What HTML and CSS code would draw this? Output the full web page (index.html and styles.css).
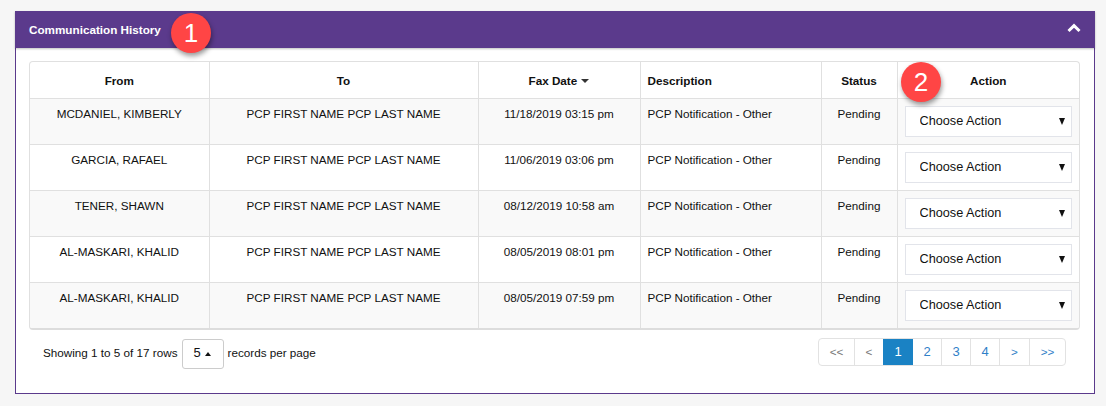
FILE: index.html
```html
<!DOCTYPE html>
<html lang="en">
<head>
  <meta charset="UTF-8" />
  <title>Communication History</title>
  <link rel="stylesheet" href="styles.css">
</head>
<body>
  <div class="panel">
    <div class="panel-heading">
      <span class="panel-title">Communication History</span>
      <svg class="collapse-icon" width="14" height="10" viewBox="0 0 14 10"><path d="M1.5 8 L7 2.6 L12.5 8" fill="none" stroke="#fff" stroke-width="3"/></svg>
    </div>
    <div class="panel-body">
      <div class="table-wrap">
        <table class="history-table">
          <colgroup>
            <col class="col-from"><col class="col-to"><col class="col-date"><col class="col-desc"><col class="col-status"><col class="col-action">
          </colgroup>
          <thead>
            <tr>
              <th>From</th>
              <th>To</th>
              <th>Fax Date <span class="caret-down"></span></th>
              <th class="left">Description</th>
              <th>Status</th>
              <th>Action</th>
            </tr>
          </thead>
          <tbody>
            <tr>
              <td>MCDANIEL, KIMBERLY</td>
              <td>PCP FIRST NAME PCP LAST NAME</td>
              <td>11/18/2019 03:15 pm</td>
              <td class="left">PCP Notification - Other</td>
              <td>Pending</td>
              <td class="action"><div class="select-wrap"><select><option>Choose Action</option></select></div></td>
            </tr>
            <tr>
              <td>GARCIA, RAFAEL</td>
              <td>PCP FIRST NAME PCP LAST NAME</td>
              <td>11/06/2019 03:06 pm</td>
              <td class="left">PCP Notification - Other</td>
              <td>Pending</td>
              <td class="action"><div class="select-wrap"><select><option>Choose Action</option></select></div></td>
            </tr>
            <tr>
              <td>TENER, SHAWN</td>
              <td>PCP FIRST NAME PCP LAST NAME</td>
              <td>08/12/2019 10:58 am</td>
              <td class="left">PCP Notification - Other</td>
              <td>Pending</td>
              <td class="action"><div class="select-wrap"><select><option>Choose Action</option></select></div></td>
            </tr>
            <tr>
              <td>AL-MASKARI, KHALID</td>
              <td>PCP FIRST NAME PCP LAST NAME</td>
              <td>08/05/2019 08:01 pm</td>
              <td class="left">PCP Notification - Other</td>
              <td>Pending</td>
              <td class="action"><div class="select-wrap"><select><option>Choose Action</option></select></div></td>
            </tr>
            <tr>
              <td>AL-MASKARI, KHALID</td>
              <td>PCP FIRST NAME PCP LAST NAME</td>
              <td>08/05/2019 07:59 pm</td>
              <td class="left">PCP Notification - Other</td>
              <td>Pending</td>
              <td class="action"><div class="select-wrap"><select><option>Choose Action</option></select></div></td>
            </tr>
          </tbody>
        </table>
      </div>
      <div class="table-footer">
        <div class="page-info">
          <span class="page-text">Showing 1 to 5 of 17 rows</span>
          <button class="page-size">5 <span class="caret-up"></span></button>
          <span class="page-text">records per page</span>
        </div>
        <ul class="pagination">
          <li class="muted first">&lt;&lt;</li>
          <li class="muted">&lt;</li>
          <li class="active">1</li>
          <li class="narrow">2</li>
          <li>3</li>
          <li>4</li>
          <li class="arrow">&gt;</li>
          <li class="last">&gt;&gt;</li>
        </ul>
      </div>
    </div>
  </div>
  <div class="badge badge-one">1</div>
  <div class="badge badge-two">2</div>
</body>
</html>
```

FILE: styles.css
```css
* {
  box-sizing: border-box;
}

html, body {
  margin: 0;
  padding: 0;
  height: 100%;
  background: #f6f6f6;
  font-family: "Liberation Sans", Arial, sans-serif;
  font-size: 11.7px;
  color: #111;
  overflow: hidden;
}

body {
  padding: 11px 11px 0 15px;
  position: relative;
}

.panel {
  height: 383px;
  background: #fff;
  border: 1px solid #5b3a8c;
}

.panel-heading {
  height: 37px;
  margin: -1px -1px 0 -1px;
  padding: 0 14px;
  background: #5b3a8c;
  color: #fff;
  display: flex;
  justify-content: space-between;
  align-items: center;
  box-shadow: 0 1px 2px rgba(0, 0, 0, 0.25);
}

.panel-title {
  font-weight: 700;
  margin-bottom: 1px;
}

.collapse-icon {
  margin-bottom: 3px;
}

.panel-body {
  padding: 13px 14px 0 13px;
}

.table-wrap {
  width: 1051px;
  border: 1px solid #e0e0e0;
  border-bottom: 2px solid #ddd;
  border-radius: 4px;
  overflow: hidden;
}

.history-table {
  width: 100%;
  table-layout: fixed;
  border-collapse: collapse;
}

.col-from { width: 179px; }
.col-to { width: 269px; }
.col-date { width: 162px; }
.col-desc { width: 181px; }
.col-status { width: 76px; }
.col-action { width: 182px; }

.history-table th,
.history-table td {
  border-left: 1px solid #e0e0e0;
  border-top: 1px solid #e0e0e0;
  text-align: center;
  vertical-align: top;
  padding: 8px 7px;
  line-height: 14px;
  font-weight: 400;
}

.history-table th {
  height: 36px;
  padding-top: 12px;
  font-weight: 700;
  border-top: 0;
}

.history-table th:first-child,
.history-table td:first-child {
  border-left: 0;
}

.history-table td {
  height: 46px;
}

.history-table .left {
  text-align: left;
}

.history-table tbody tr:nth-child(odd) {
  background: #f9f9f9;
}

.history-table .action {
  padding: 7px 7px 0;
}

.caret-down {
  display: inline-block;
  margin-left: 1px;
  vertical-align: 2px;
  border-left: 4px solid transparent;
  border-right: 4px solid transparent;
  border-top: 4px solid #333;
}

.select-wrap {
  position: relative;
  width: 167px;
}

.select-wrap::after {
  content: "";
  position: absolute;
  top: 12px;
  right: 7px;
  border-left: 3.5px solid transparent;
  border-right: 3.5px solid transparent;
  border-top: 7px solid #111;
  pointer-events: none;
}

.select-wrap select {
  appearance: none;
  -webkit-appearance: none;
  display: block;
  width: 100%;
  height: 31px;
  padding: 0 14px;
  background: #fff;
  border: 1px solid #e2e4ea;
  border-radius: 0;
  font-family: inherit;
  font-size: 12.7px;
  color: #111;
}

.table-footer {
  display: flex;
  justify-content: space-between;
  align-items: flex-start;
  padding: 7px 14px 0 14px;
}

.page-info {
  display: flex;
  align-items: center;
  gap: 4px;
  height: 32px;
  padding-top: 1px;
}

.page-text {
  margin-bottom: 3px;
}

.page-size {
  width: 42px;
  height: 30px;
  padding: 0 0 2px;
  margin: 0;
  background: #fff;
  border: 1px solid #ccc;
  border-radius: 3px;
  font-family: inherit;
  font-size: 13px;
  color: #111;
}

.caret-up {
  display: inline-block;
  margin-left: 1px;
  vertical-align: 1px;
  border-left: 3.5px solid transparent;
  border-right: 3.5px solid transparent;
  border-bottom: 4px solid #111;
}

.pagination {
  display: flex;
  list-style: none;
  margin: 1px 0 0;
  padding: 0;
  height: 28px;
  border: 1px solid #e2e2e2;
  border-radius: 4px;
  overflow: hidden;
  color: #2f80c8;
  font-size: 13px;
}

.pagination li {
  width: 29px;
  line-height: 25px;
  text-align: center;
  border-left: 1px solid #e2e2e2;
}

.pagination .first {
  width: 35px;
  border-left: 0;
}

.pagination .last {
  width: 36px;
}

.pagination .first,
.pagination .muted,
.pagination .arrow,
.pagination .last {
  font-size: 11.7px;
}

.pagination .narrow {
  width: 28px;
  border-left: 0;
}

.pagination .arrow {
  width: 30px;
}

.pagination .muted {
  color: #777;
}

.pagination .active {
  width: 30px;
  margin: -1px 0;
  line-height: 27px;
  height: 28px;
  background: #1a82c4;
  border-left: 0;
  color: #fff;
}

.badge {
  position: absolute;
  width: 40px;
  height: 40px;
  border-radius: 50%;
  background: #ff4545;
  color: #fff;
  font-size: 26px;
  line-height: 40px;
  text-align: center;
  box-shadow: 1px 3px 5px rgba(0, 0, 0, 0.4);
}

.badge-one {
  left: 171px;
  top: 13px;
}

.badge-two {
  left: 901px;
  top: 62px;
}
```
